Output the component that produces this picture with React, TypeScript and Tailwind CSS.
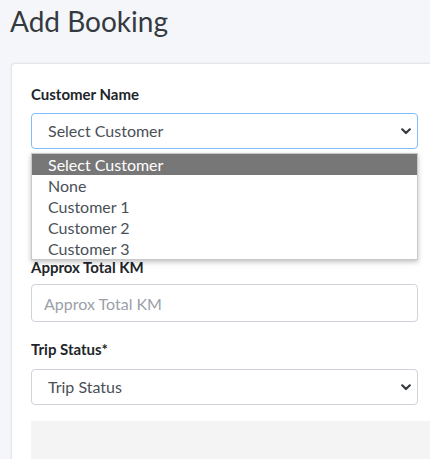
import React from "react";

function Chevron() {
  return (
    <svg width="10" height="7" viewBox="0 0 10 7" className="shrink-0">
      <path d="M1.2 1.3 L5 5 L8.8 1.3" fill="none" stroke="#343a40" strokeWidth="2.2" strokeLinecap="round" strokeLinejoin="round" />
    </svg>
  );
}

export default function App() {
  const options = ["Select Customer", "None", "Customer 1", "Customer 2", "Customer 3"];

  return (
    <div
      className="w-[430px] h-[459px] overflow-hidden bg-[#f4f6f9] text-[#212529]"
      style={{ fontFamily: "Lato, 'Noto Sans', sans-serif" }}
    >
      <h1 className="pl-[10px] pt-[4px] text-[28px] leading-[34px] font-normal text-[#343a40]">Add Booking</h1>

      <div className="ml-[11px] mt-[25px] w-[430px] rounded-[4px] border border-[#e3e6ea] bg-white pl-[19px] pr-[20px] pt-[19px] shadow-[0_0_2px_rgba(0,0,0,0.08)]">
        {/* Customer Name */}
        <label className="block text-[15px] leading-[22px] font-bold">Customer Name</label>
        <div className="relative mt-[8px] w-[387px]">
          <div className="flex h-[36px] items-center justify-between rounded-[4px] border border-[#80bdff] pl-[16px] pr-[6px] text-[16px] text-[#495057]">
            <span>Select Customer</span>
            <Chevron />
          </div>
          <div className="absolute left-0 top-[40px] z-10 w-[387px] border border-[#c8c8c8] bg-white shadow-[0_2px_5px_rgba(0,0,0,0.25)]">
            {options.map((o, i) => (
              <div
                key={o}
                className={
                  i === 0
                    ? "h-[21px] pl-[16px] text-[16px] leading-[21px] bg-[#777777] text-white"
                    : "h-[21px] pl-[16px] text-[16px] leading-[21px] text-[#495057]"
                }
              >
                {o}
              </div>
            ))}
          </div>
        </div>

        {/* Approx Total KM */}
        <label className="mt-[107px] block text-[15px] leading-[22px] font-bold">Approx Total KM</label>
        <input
          placeholder="Approx Total KM"
          className="mt-[6px] block h-[38px] w-[387px] rounded-[4px] border border-[#ced4da] pl-[12px] text-[16px] text-[#495057] outline-none placeholder:text-[#9aa1a8]"
        />

        {/* Trip Status */}
        <label className="mt-[16px] block text-[15px] leading-[22px] font-bold">Trip Status*</label>
        <div className="mt-[9px] flex h-[36px] w-[387px] items-center justify-between rounded-[4px] border border-[#ced4da] pl-[16px] pr-[6px] text-[16px] text-[#495057]">
          <span>Trip Status</span>
          <Chevron />
        </div>

        <div className="mt-[16px] h-[60px] w-[420px] bg-[#f4f4f4]" />
      </div>
    </div>
  );
}
